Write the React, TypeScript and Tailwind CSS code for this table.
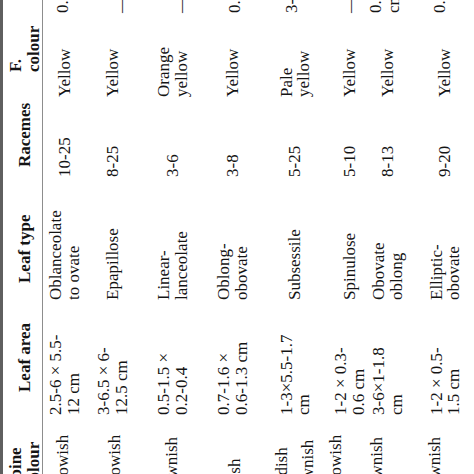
import React from "react";

type Row = {
  h: string;
  spine: string[];
  spineCls: string;
  area: string[];
  type: string[];
  rac: string;
  fc: string[];
  next: string[];
  nextCls: string;
};

const rows: Row[] = [
  { h: "h-[43px]", spine: ["Yellowish"], spineCls: "mt-[11px]", area: ["2.5-6 × 5.5-", "12 cm"], type: ["Oblanceolate", "to ovate"], rac: "10-25", fc: ["Yellow"], next: ["0.5-1.5"], nextCls: "mt-[11px]" },
  { h: "h-[53px]", spine: ["Yellowish"], spineCls: "mt-[20px]", area: ["3-6.5 × 6-", "12.5 cm"], type: ["Epapillose"], rac: "8-25", fc: ["Yellow"], next: ["—"], nextCls: "mt-[26px]" },
  { h: "h-[67px]", spine: ["Brownish"], spineCls: "mt-[24px]", area: ["0.5-1.5 ×", "0.2-0.4"], type: ["Linear-", "lanceolate"], rac: "3-6", fc: ["Orange", "yellow"], next: ["—"], nextCls: "mt-[33px]" },
  { h: "h-[53px]", spine: ["Bluish"], spineCls: "mt-[20px]", area: ["0.7-1.6 ×", "0.6-1.3 cm"], type: ["Oblong-", "obovate"], rac: "3-8", fc: ["Yellow"], next: ["0.8-1.2"], nextCls: "mt-[20px]" },
  { h: "h-[72px]", spine: ["Reddish", "brownish"], spineCls: "mt-[14px] gap-[8.5px]", area: ["1-3×5.5-1.7", "cm"], type: ["Subsessile"], rac: "5-25", fc: ["Pale", "yellow"], next: ["3-4"], nextCls: "mt-[24px]" },
  { h: "h-[37px]", spine: ["Yellowish"], spineCls: "mt-[-4px]", area: ["1-2 × 0.3-", "0.6 cm"], type: ["Spinulose"], rac: "5-10", fc: ["Yellow"], next: ["—"], nextCls: "mt-[10px]" },
  { h: "h-[39px]", spine: ["Brownish"], spineCls: "mt-[0px]", area: ["3-6×1-1.8", "cm"], type: ["Obovate", "oblong"], rac: "8-13", fc: ["Yellow"], next: ["0.5-1.0", "cm"], nextCls: "mt-[-1px]" },
  { h: "h-[76px]", spine: ["Brownish"], spineCls: "mt-[19px]", area: ["1-2 × 0.5-", "1.5 cm"], type: ["Elliptic-", "obovate"], rac: "9-20", fc: ["Yellow"], next: ["0.6-1.4"], nextCls: "mt-[24px]" },
];

function Lines({ items }: { items: string[] }) {
  return (
    <>
      {items.map((t, i) => (
        <div key={i} className="whitespace-nowrap">
          {t}
        </div>
      ))}
    </>
  );
}

export default function App() {
  return (
    <div className="w-[474px] h-[474px] overflow-hidden bg-white">
      <div className="w-[474px] h-[474px] overflow-hidden -rotate-90 bg-white">
        <div className="flex flex-col font-['Liberation_Serif',serif] text-[17px] leading-[17.5px] text-[#141414]">
          <div className="h-[3px] w-full bg-[#5f5f5f]" />
          <div className="flex h-[39px] w-max ml-[-29px] font-bold">
            <div className="w-[88px] pl-[15px] self-end">
              <Lines items={["Spine", "colour"]} />
            </div>
            <div className="w-[115px] pl-[23px] pt-[13px] self-start">
              <Lines items={["Leaf area"]} />
            </div>
            <div className="w-[123px] pl-[17px] pt-[13px] self-start">
              <Lines items={["Leaf type"]} />
            </div>
            <div className="w-[80px] pl-[10px] pt-[13px] self-start">
              <Lines items={["Racemes"]} />
            </div>
            <div className="w-[84px] pl-[25px] self-end">
              <Lines items={["F.", "colour"]} />
            </div>
            <div className="w-[100px]" />
          </div>
          <div className="h-px w-full bg-[#8d8d8d]" />
          {rows.map((r, i) => (
            <div key={i} className={`flex items-center w-max ml-[-29px] ${r.h}`}>
              <div className={`w-[88px] self-start flex flex-col ${r.spineCls}`}>
                <Lines items={r.spine} />
              </div>
              <div className="w-[115px]">
                <Lines items={r.area} />
              </div>
              <div className="w-[123px]">
                <Lines items={r.type} />
              </div>
              <div className="w-[80px]">
                <Lines items={[r.rac]} />
              </div>
              <div className="w-[84px]">
                <Lines items={r.fc} />
              </div>
              <div className={`w-[100px] self-start ${r.nextCls}`}>
                <Lines items={r.next} />
              </div>
            </div>
          ))}
        </div>
      </div>
    </div>
  );
}
